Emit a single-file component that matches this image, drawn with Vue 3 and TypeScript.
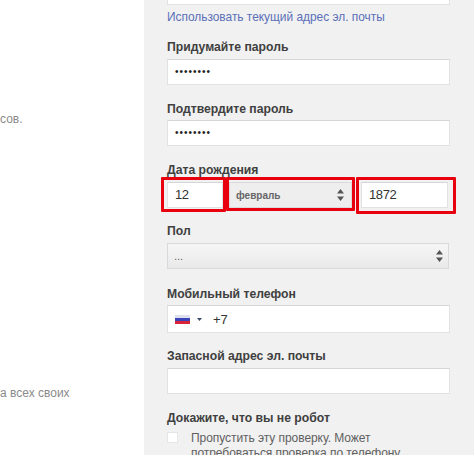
<script setup lang="ts">
const month = 'февраль'
</script>

<template>
  <main class="page">
    <aside class="intro">
      <p class="note note-one">сов.</p>
      <p class="note note-two">а всех своих</p>
    </aside>
    <form class="panel" @submit.prevent>
      <div class="input cut-off"></div>
      <a class="link">Использовать текущий адрес эл. почты</a>

      <label class="label l-pass">Придумайте пароль</label>
      <div class="input dots">••••••••</div>

      <label class="label l-confirm">Подтвердите пароль</label>
      <div class="input dots">••••••••</div>

      <label class="label l-birth">Дата рождения</label>
      <div class="birth-row">
        <div class="mark mark-day"><div class="input value">12</div></div>
        <div class="mark mark-month">
          <div class="select month">
            <span>{{ month }}</span>
            <svg class="arrows" width="7" height="12" viewBox="0 0 7 12"><path d="M3.5 0 7 4.6H0zM0 7.4h7L3.5 12z" /></svg>
          </div>
        </div>
        <div class="mark mark-year"><div class="input value">1872</div></div>
      </div>

      <label class="label l-gender">Пол</label>
      <div class="select full">
        <span>...</span>
        <svg class="arrows" width="7" height="12" viewBox="0 0 7 12"><path d="M3.5 0 7 4.6H0zM0 7.4h7L3.5 12z" /></svg>
      </div>

      <label class="label l-mobile">Мобильный телефон</label>
      <div class="input phone">
        <svg class="flag" width="15" height="9" viewBox="0 0 15 9">
          <rect width="15" height="3" fill="#dfe0ee" />
          <rect y="3" width="15" height="3" fill="#3a44b8" />
          <rect y="6" width="15" height="3" fill="#d8243a" />
        </svg>
        <svg class="caret" width="5" height="3" viewBox="0 0 5 3"><path d="M0 0h5L2.5 3z" fill="#3b4a6b" /></svg>
        <span>+7</span>
      </div>

      <label class="label l-backup">Запасной адрес эл. почты</label>
      <div class="input"></div>

      <label class="label l-robot">Докажите, что вы не робот</label>
      <div class="check-row">
        <span class="checkbox"></span>
        <span class="check-text">Пропустить эту проверку. Может потребоваться проверка по телефону</span>
      </div>
    </form>
  </main>
</template>

<style>
html, body { margin: 0; background: #fff; overflow: hidden; }
</style>

<style scoped>
.page {
  width: 474px;
  height: 455px;
  overflow: hidden;
  display: flex;
  font-family: "Liberation Sans", Arial, sans-serif;
  color: #404040;
}
.intro { width: 144px; flex: none; position: relative; }
.note { position: absolute; margin: 0; left: 0; font-size: 12px; color: #8a8a8a; white-space: nowrap; }
.note-one { top: 112px; }
.note-two { top: 386px; }
.panel {
  flex: 1;
  min-width: 0;
  background: #f1f1f1;
  padding: 0 24px 0 23px;
  display: flex;
  flex-direction: column;
  align-items: stretch;
}
.input {
  box-sizing: border-box;
  height: 26px;
  background: #fff;
  border: 1px solid #e2e2e2;
  border-top-color: #d6d6d6;
  font-size: 13px;
  color: #333;
  flex: none;
}
.cut-off { height: 5px; border-top: 0; }
.link { margin-top: 5px; font-size: 11.9px; line-height: 14px; color: #5a6fb8; white-space: nowrap; }
.label { font-size: 12.2px; font-weight: 700; line-height: 16px; color: #404040; white-space: nowrap; }
.l-pass { margin: 15px 0 4px; }
.l-confirm { margin: 16px 0 3px; }
.l-birth { margin: 16px 0 -1px; }
.l-gender { margin: 9px 0 4px; }
.l-mobile { margin: 17px 0 3px; }
.l-backup { margin: 15px 0 4px; }
.l-robot { margin: 16px 0 5px; }
.dots { font-size: 10px; line-height: 24px; padding-left: 7px; color: #222; letter-spacing: 1px; }
.birth-row { display: flex; height: 37px; margin: 0 -6px; flex: none; }
.mark { box-sizing: border-box; border: 3px solid #e8000e; border-radius: 1px; padding-top: 2px; flex: none; }
.mark-day { width: 65px; height: 35px; padding-left: 3px; }
.mark-month { width: 129px; height: 34px; }
.mark-year { width: 100px; height: 37px; margin-left: 1px; padding-left: 2px; padding-right: 5px; }
.value { line-height: 24px; padding-left: 7px; font-size: 13px; letter-spacing: -.4px; }
.select {
  box-sizing: border-box;
  background: linear-gradient(#f6f6f6, #e9e9e9);
  border: 1px solid #dadada;
  display: flex;
  align-items: center;
  justify-content: space-between;
  font-size: 11px;
  color: #666;
  padding: 0 5px 0 6px;
  flex: none;
}
.month { height: 26px; font-size: 10px; font-weight: 700; background: #eee; padding: 0 7px 0 6px; }
.full { height: 26px; width: 282px; }
.arrows { fill: #555; flex: none; }
.phone { display: flex; align-items: center; height: 28px; padding-left: 7px; }
.flag { margin-right: 7px; }
.caret { margin-right: 11px; }
.phone span { font-size: 13px; }
.check-row { display: flex; gap: 13px; }
.checkbox { box-sizing: border-box; width: 11px; height: 11px; margin-top: 1px; background: #fff; border: 1px solid #e6e6e6; flex: none; }
.check-text { font-size: 12px; line-height: 15px; color: #606060; letter-spacing: -.06px; }
</style>
